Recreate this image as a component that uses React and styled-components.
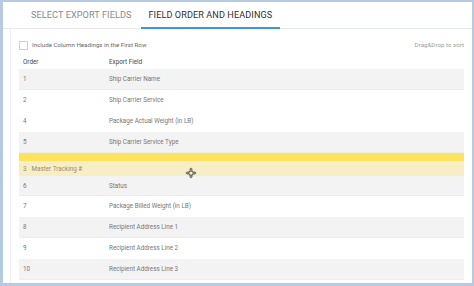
import React from 'react';
import styled, { createGlobalStyle } from 'styled-components';

const GlobalStyle = createGlobalStyle`
  html, body {
    margin: 0;
    padding: 0;
    background: #fff;
  }
  body {
    font-family: Roboto, "Liberation Sans", Arial, sans-serif;
  }
`;

const Frame = styled.div`
  box-sizing: border-box;
  width: 474px;
  height: 286px;
  border-style: solid;
  border-color: #b6cae2;
  border-width: 2px 2px 3px 3px;
  background: #fff;
  overflow: hidden;
  display: flex;
  flex-direction: column;
`;

const TabBar = styled.div`
  display: flex;
  height: 26px;
  border-bottom: 1px solid #e6e8ea;
  padding-left: 28px;
  flex-shrink: 0;
`;

const Tab = styled.div`
  display: flex;
  align-items: center;
  padding: ${p => (p.active ? '0 8px 0 7px' : '0 10px 0 0')};
  font-size: 9.1px;
  letter-spacing: 0.1px;
  color: ${p => (p.active ? '#2f2f2f' : '#8a8a8a')};
  border-bottom: 2px solid ${p => (p.active ? '#3d95dc' : 'transparent')};
  margin-bottom: -1px;
  white-space: nowrap;
`;

const Panel = styled.div`
  flex: 1;
  margin-left: 7px;
  border-left: 1px solid #eceeef;
  padding: 9px 8px 0 8px;
  display: flex;
  flex-direction: column;
`;

const OptionRow = styled.div`
  display: flex;
  align-items: center;
  justify-content: space-between;
  height: 14px;
  font-size: 6.2px;
`;

const CheckLabel = styled.label`
  display: flex;
  align-items: center;
  gap: 4px;
  color: #6a6a6a;
`;

const Box = styled.span`
  box-sizing: border-box;
  width: 9px;
  height: 9px;
  border: 1px solid #cfcfcf;
  background: #fff;
`;

const Hint = styled.span`
  color: #a0a0a0;
`;

const Table = styled.div`
  margin-top: 3px;
  display: flex;
  flex-direction: column;
`;

const Row = styled.div`
  display: grid;
  grid-template-columns: 86px 1fr;
  align-items: center;
  height: ${p => p.h || 21}px;
  padding-left: 4px;
  font-size: 6.3px;
  color: ${p => (p.head ? '#454545' : '#777')};
  background: ${p => (p.striped ? '#f3f3f3' : 'transparent')};
  border-bottom: ${p => (p.striped ? '1px solid #ececec' : '1px solid transparent')};
  box-sizing: border-box;
`;

const Placeholder = styled.div`
  height: 8px;
  background: #fde35e;
`;

const DragRow = styled.div`
  position: relative;
  display: flex;
  align-items: center;
  gap: 5px;
  height: 15px;
  padding-left: 4px;
  background: #f8eec6;
  font-size: 6.3px;
  color: #9a8d66;
`;

const MoveIcon = styled.svg`
  position: absolute;
  left: 166px;
  top: 6px;
  width: 12px;
  height: 12px;
`;

const rowsBefore = [
  { n: 1, f: 'Ship Carrier Name', s: true },
  { n: 2, f: 'Ship Carrier Service' },
  { n: 4, f: 'Package Actual Weight (in LB)' },
  { n: 5, f: 'Ship Carrier Service Type', s: true },
];

const rowsAfter = [
  { n: 6, f: 'Status', s: true, h: 20 },
  { n: 7, f: 'Package Billed Weight (in LB)' },
  { n: 8, f: 'Recipient Address Line 1', s: true },
  { n: 9, f: 'Recipient Address Line 2' },
  { n: 10, f: 'Recipient Address Line 3', s: true },
];

export default function App() {
  return (
    <>
      <GlobalStyle />
      <Frame>
        <TabBar>
          <Tab>SELECT EXPORT FIELDS</Tab>
          <Tab active>FIELD ORDER AND HEADINGS</Tab>
        </TabBar>
        <Panel>
          <OptionRow>
            <CheckLabel>
              <Box />
              Include Column Headings in the First Row
            </CheckLabel>
            <Hint>Drag&amp;Drop to sort</Hint>
          </OptionRow>
          <Table>
            <Row head h={14}>
              <span>Order</span>
              <span>Export Field</span>
            </Row>
            {rowsBefore.map(r => (
              <Row key={r.n} striped={r.s} h={r.h}>
                <span>{r.n}</span>
                <span>{r.f}</span>
              </Row>
            ))}
            <Placeholder />
            <DragRow>
              <span>3</span>
              <span>Master Tracking #</span>
              <MoveIcon viewBox="0 0 24 24">
                <g fill="#666">
                  <polygon points="12 1 16 5.5 8 5.5" />
                  <polygon points="12 23 16 18.5 8 18.5" />
                  <polygon points="1 12 5.5 8 5.5 16" />
                  <polygon points="23 12 18.5 8 18.5 16" />
                  <circle cx="12" cy="12" r="4.5" fill="none" stroke="#666" strokeWidth="2.5" />
                </g>
                <g stroke="#666" strokeWidth="2">
                  <line x1="12" y1="5" x2="12" y2="8" />
                  <line x1="12" y1="16" x2="12" y2="19" />
                  <line x1="5" y1="12" x2="8" y2="12" />
                  <line x1="16" y1="12" x2="19" y2="12" />
                </g>
              </MoveIcon>
            </DragRow>
            {rowsAfter.map(r => (
              <Row key={r.n} striped={r.s} h={r.h}>
                <span>{r.n}</span>
                <span>{r.f}</span>
              </Row>
            ))}
          </Table>
        </Panel>
      </Frame>
    </>
  );
}
